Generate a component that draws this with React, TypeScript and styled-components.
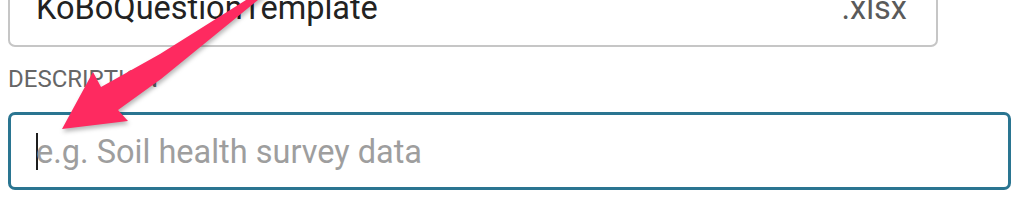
import React from 'react'
import styled, { createGlobalStyle } from 'styled-components'

const GlobalStyle = createGlobalStyle`
  html, body {
    margin: 0;
    padding: 0;
    background: #ffffff;
    overflow: hidden;
  }
  body {
    font-family: Roboto, "Liberation Sans", Arial, sans-serif;
  }
`

const Page = styled.div`
  position: relative;
  width: 1030px;
  height: 200px;
  overflow: hidden;
`

// the form is scrolled a little, so the file row starts above the fold
const Form = styled.div`
  display: flex;
  flex-direction: column;
  margin-top: -31px;
  padding-left: 8px;
  width: 1003px;
`

const FileRow = styled.div`
  display: flex;
  align-items: flex-start;
`

const FileBox = styled.div`
  box-sizing: border-box;
  width: 930px;
  height: 78px;
  display: flex;
  align-items: center;
  justify-content: space-between;
  padding: 0 29px 0 26px;
  border: 2px solid #c6c6c6;
  border-radius: 7px;
  font-size: 32.5px;
  line-height: 38px;
`

const FileName = styled.span`
  color: #222222;
`

const Extension = styled.span`
  color: #5a5a5a;
`

const DeleteButton = styled.button`
  display: flex;
  margin: -9px 0 0 19px;
  padding: 0;
  border: none;
  background: none;
  color: #6b6b6b;
`

const Label = styled.label`
  margin: 18px 0 19px 0;
  font-size: 24px;
  line-height: 28px;
  color: #666666;
`

const DescriptionBox = styled.div<{ $focused?: boolean }>`
  box-sizing: border-box;
  width: 1003px;
  height: 78px;
  display: flex;
  align-items: flex-start;
  padding: 18px 25px 0 25px;
  border: 3px solid ${({ $focused }) => ($focused ? '#2a7591' : '#c6c6c6')};
  border-radius: 7px;
  font-size: 32.5px;
  line-height: 38px;
`

const Caret = styled.span`
  display: inline-block;
  width: 2px;
  height: 37px;
  margin-right: -2px;
  background: #1e1e1e;
`

const Placeholder = styled.span`
  color: #9e9e9e;
`

const Annotation = styled.svg`
  position: absolute;
  left: 0;
  top: 0;
  overflow: visible;
  pointer-events: none;
  filter: drop-shadow(1px 3px 2px rgba(0, 0, 0, 0.28));
`

const TrashIcon = () => (
  <svg width="44" height="44" viewBox="0 0 24 24" fill="currentColor">
    <path d="M6 19c0 1.1.9 2 2 2h8c1.1 0 2-.9 2-2V7H6v12zM19 4h-3.5l-1-1h-5l-1 1H5v2h14V4z" />
  </svg>
)

const Arrow = () => (
  <Annotation width="300" height="150" viewBox="0 0 300 150">
    <polygon
      fill="#fe2a60"
      points="62,129 93,72 101,87 160,54 246,0 256,-8 268,-8 258,0 161,79 118,110 128,121"
    />
  </Annotation>
)

const App = () => {
  return (
    <>
      <GlobalStyle />
      <Page>
        <Form>
          <FileRow>
            <FileBox>
              <FileName>KoBoQuestionTemplate</FileName>
              <Extension>.xlsx</Extension>
            </FileBox>
            <DeleteButton aria-label="Remove file">
              <TrashIcon />
            </DeleteButton>
          </FileRow>
          <Label>DESCRIPTION</Label>
          <DescriptionBox $focused>
            <Caret />
            <Placeholder>e.g. Soil health survey data</Placeholder>
          </DescriptionBox>
        </Form>
        <Arrow />
      </Page>
    </>
  )
}

export default App
